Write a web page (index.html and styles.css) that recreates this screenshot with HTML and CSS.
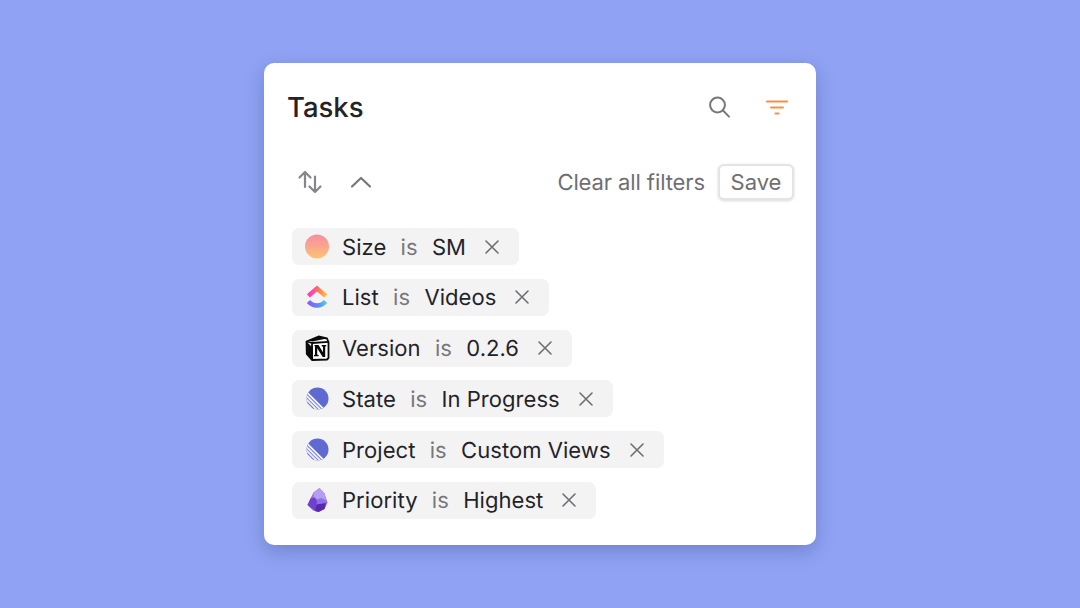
FILE: index.html
```html
<!DOCTYPE html>
<html lang="en">
<head>
<meta charset="utf-8">
<title>Tasks</title>
<link rel="stylesheet" href="styles.css">
</head>
<body>
<main class="card">
  <header class="head">
    <h1 class="title">Tasks</h1>
    <div class="head-icons">
      <svg class="ic-search" width="24" height="24" viewBox="0 0 24 24" fill="none" stroke="#77777b" stroke-width="2" stroke-linecap="round"><circle cx="10.500" cy="10" r="7.400"/><path d="M15.800 15.300 22 21.600"/></svg>
      <svg class="ic-filter" width="24" height="24" viewBox="0 0 24 24" fill="none" stroke="#f98d4b" stroke-width="2" stroke-linecap="round"><path d="M2 6.500h20M6 12.500h12M10.500 18.500h3"/></svg>
    </div>
  </header>
  <div class="tools">
    <div class="tool-icons">
      <svg class="ic-sort" width="26" height="26" viewBox="0 0 26 26" fill="none" stroke="#85858a" stroke-width="2.200" stroke-linecap="round" stroke-linejoin="round"><path d="M8 3v15M2.500 8.500 8 3l5.500 5.500M18 7.500v15.500M12.500 17.500 18 23l5.500-5.500"/></svg>
      <svg class="ic-chev" width="24" height="24" viewBox="0 0 24 24" fill="none" stroke="#77777b" stroke-width="2.200" stroke-linecap="round" stroke-linejoin="round"><path d="M3 16.500 12 8l9 8.500"/></svg>
    </div>
    <div class="tool-actions">
      <span class="clear">Clear all filters</span>
      <button class="save">Save</button>
    </div>
  </div>
  <ul class="chips">
    <li class="chip">
      <svg class="logo" width="26" height="26" viewBox="0 0 26 26"><defs><linearGradient id="sz" x1="0" y1="0" x2="0" y2="1"><stop offset="0" stop-color="#f78fa0"/><stop offset=".5" stop-color="#f9a68f"/><stop offset="1" stop-color="#fcc56d"/></linearGradient></defs><circle cx="13" cy="12.500" r="12" fill="url(#sz)"/></svg>
      <span class="k">Size</span><span class="is">is</span><span class="k">SM</span>
      <svg class="x" width="16" height="16" viewBox="0 0 16 16" fill="none" stroke="#6e6e73" stroke-width="1.600" stroke-linecap="round"><path d="M2 2l12 12M14 2 2 14"/></svg>
    </li>
    <li class="chip">
      <svg class="logo" width="26" height="26" viewBox="0 0 26 26" fill="none" stroke-width="4.400" stroke-linecap="square" stroke-linejoin="miter"><defs><linearGradient id="cu1" x1="0" y1="0" x2="1" y2="0"><stop offset="0" stop-color="#fb3fc0"/><stop offset=".55" stop-color="#fd6c5c"/><stop offset="1" stop-color="#ffb040"/></linearGradient><linearGradient id="cu2" x1="0" y1="0" x2="1" y2="0"><stop offset="0" stop-color="#8a5cf8"/><stop offset=".6" stop-color="#5d8cf8"/><stop offset="1" stop-color="#4cc8f0"/></linearGradient></defs><path d="M6 10.500 13 4.500l7 6" stroke="url(#cu1)"/><path d="M4.500 17.500c2.300 2.700 5 4 8.500 4s6.200-1.300 8.500-4" stroke="url(#cu2)" stroke-linecap="butt"/></svg>
      <span class="k">List</span><span class="is">is</span><span class="k">Videos</span>
      <svg class="x" width="16" height="16" viewBox="0 0 16 16" fill="none" stroke="#6e6e73" stroke-width="1.600" stroke-linecap="round"><path d="M2 2l12 12M14 2 2 14"/></svg>
    </li>
    <li class="chip">
      <svg class="logo" width="26" height="26" viewBox="0 0 26 26"><path d="M2.500 6.500 14.500 1.500 23 3.500 24.500 7V23L23 24.500 8 25 2.800 19Z" fill="#fff" stroke="#0a0a0a" stroke-width="1.800" stroke-linejoin="round"/><path d="M2.500 6.500 8 8l.2 17M8 8l16.500-1.200" fill="none" stroke="#0a0a0a" stroke-width="1.800"/><path d="M2.500 6.500 8 12v13L2.800 19Z M4 5.500l10.500-4 8.500 2-14.800 3Z" fill="#0a0a0a"/><path d="M10.500 10h4l4.500 7.200v-5.500l-1.300-.4V10h4.500v1.300l-1 .3V22h-2.500l-5.500-8.700v6.400l1.500.4v1.200h-4.700v-1.200l1-.4v-8.200l-.5-.5Z" fill="#0a0a0a"/></svg>
      <span class="k">Version</span><span class="is">is</span><span class="k">0.2.6</span>
      <svg class="x" width="16" height="16" viewBox="0 0 16 16" fill="none" stroke="#6e6e73" stroke-width="1.600" stroke-linecap="round"><path d="M2 2l12 12M14 2 2 14"/></svg>
    </li>
    <li class="chip">
      <svg class="logo" width="26" height="26" viewBox="0 0 26 26"><defs><clipPath id="ln"><circle cx="13.500" cy="12.500" r="11"/></clipPath></defs><circle cx="13.500" cy="12.500" r="11" fill="#5e6ad2"/><g clip-path="url(#ln)"><path d="M0 3.500 24 27.500M0 7.300 24 31.300M0 11 24 35M0 14.800 24 38.800" stroke="#f3f3f4" stroke-width="1.900" fill="none"/></g></svg>
      <span class="k">State</span><span class="is">is</span><span class="k">In Progress</span>
      <svg class="x" width="16" height="16" viewBox="0 0 16 16" fill="none" stroke="#6e6e73" stroke-width="1.600" stroke-linecap="round"><path d="M2 2l12 12M14 2 2 14"/></svg>
    </li>
    <li class="chip">
      <svg class="logo" width="26" height="26" viewBox="0 0 26 26"><defs><clipPath id="ln2"><circle cx="13.500" cy="12.500" r="11"/></clipPath></defs><circle cx="13.500" cy="12.500" r="11" fill="#5e6ad2"/><g clip-path="url(#ln2)"><path d="M0 3.500 24 27.500M0 7.300 24 31.300M0 11 24 35M0 14.800 24 38.800" stroke="#f3f3f4" stroke-width="1.900" fill="none"/></g></svg>
      <span class="k">Project</span><span class="is">is</span><span class="k">Custom Views</span>
      <svg class="x" width="16" height="16" viewBox="0 0 16 16" fill="none" stroke="#6e6e73" stroke-width="1.600" stroke-linecap="round"><path d="M2 2l12 12M14 2 2 14"/></svg>
    </li>
    <li class="chip">
      <svg class="logo" width="26" height="26" viewBox="0 0 26 26"><path d="M15.500 1 20.500 6.500 23.500 15.500 20.500 22 14.500 25 9 23.500 3.500 18 6.500 11.500 9.500 5.500Z" fill="#8f6fe6"/><path d="M15.500 1 20.500 6.500 22 13.500 17.500 11 13 12.500 9.500 10 9.500 5.500Z" fill="#b49df3"/><path d="M3.500 18 6.500 11.500 11 10.500 13 14.500 11.500 24Z" fill="#6f42cc"/><path d="M11 24 12.500 17.500 22 16 20.500 22 14.500 25Z" fill="#5629ac"/></svg>
      <span class="k">Priority</span><span class="is">is</span><span class="k">Highest</span>
      <svg class="x" width="16" height="16" viewBox="0 0 16 16" fill="none" stroke="#6e6e73" stroke-width="1.600" stroke-linecap="round"><path d="M2 2l12 12M14 2 2 14"/></svg>
    </li>
  </ul>
</main>
</body>
</html>
```
FILE: styles.css
```css
* { box-sizing: border-box; }
html, body { margin: 0; height: 100%; }
body {
  width: 1080px;
  height: 608px;
  overflow: hidden;
  background: #8fa2f3;
  font-family: Inter, "Liberation Sans", sans-serif;
  text-rendering: geometricPrecision;
  padding: 63px 0 0 264px;
}
.card {
  width: 552px;
  height: 482px;
  background: #fff;
  border-radius: 10px;
  box-shadow: 0 6px 18px rgba(40, 50, 110, 0.28);
  padding: 0 22px 0 28px;
}
.head {
  display: flex;
  justify-content: space-between;
  align-items: center;
  height: 87px;
  margin-left: -4px;
}
.title {
  margin: 0 0 0 -1px;
  font-size: 27.500px;
  font-weight: 500;
  color: #232327;
}
.head-icons { display: flex; gap: 34px; margin-right: 5px; }
.tools {
  display: flex;
  justify-content: space-between;
  align-items: center;
  height: 36px;
  margin-top: 14px;
}
.tool-icons { display: flex; align-items: center; gap: 26px; margin-left: 5px; }
.tool-actions { display: flex; align-items: center; gap: 13px; }
.clear { font-size: 22px; letter-spacing: -0.1px; color: #6e6e73; padding-top: 2px; }
.save {
  width: 76px;
  height: 36px;
  padding: 0;
  font: inherit;
  font-size: 22px;
  color: #6e6e73;
  background: #fff;
  border: 2px solid #e4e4e6;
  border-radius: 6px;
  box-shadow: 0 1px 3px rgba(0, 0, 0, 0.15);
}
.chips {
  list-style: none;
  margin: 28px 0 0;
  padding: 0;
  display: flex;
  flex-direction: column;
  align-items: flex-start;
  gap: 13.800px;
}
.chip {
  display: flex;
  align-items: center;
  height: 37px;
  padding: 0 19px 0 12px;
  border-radius: 7px;
  background: #f3f3f4;
  font-size: 22px;
  letter-spacing: 0.05px;
  color: #232327;
}
.k, .is { padding-top: 2px; }
.logo { flex: none; margin-right: 12px; }
.is { color: #77777b; margin: 0 14.300px; }
.x { flex: none; margin-left: 18px; }
```
